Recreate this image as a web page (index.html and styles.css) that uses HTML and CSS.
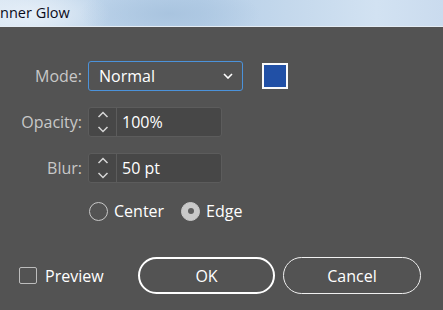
FILE: index.html
```html
<!DOCTYPE html>
<html>
<head>
<meta charset="utf-8">
<link rel="stylesheet" href="styles.css">
</head>
<body>
<div class="titlebar"><span class="title">Inner Glow</span></div>
<div class="dialog">
  <div class="form">
    <div class="label">Mode:</div>
    <div class="ctrl">
      <div class="select">
        <span class="select-text">Normal</span>
        <svg class="chev" width="10" height="6" viewBox="0 0 10 6"><path d="M1 1 L5 5 L9 1" fill="none" stroke="#fff" stroke-width="1.6"/></svg>
      </div>
      <div class="swatch"></div>
    </div>

    <div class="label">Opacity:</div>
    <div class="ctrl">
      <div class="spin">
        <div class="spin-btn">
          <svg width="12" height="24" viewBox="0 0 12 24"><path d="M1.5 7 L6 2.5 L10.5 7" fill="none" stroke="#d6d6d6" stroke-width="1.5"/><path d="M1.5 17 L6 21.5 L10.5 17" fill="none" stroke="#d6d6d6" stroke-width="1.5"/></svg>
        </div>
        <div class="spin-val">100%</div>
      </div>
    </div>

    <div class="label">Blur:</div>
    <div class="ctrl">
      <div class="spin">
        <div class="spin-btn">
          <svg width="12" height="24" viewBox="0 0 12 24"><path d="M1.5 7 L6 2.5 L10.5 7" fill="none" stroke="#d6d6d6" stroke-width="1.5"/><path d="M1.5 17 L6 21.5 L10.5 17" fill="none" stroke="#d6d6d6" stroke-width="1.5"/></svg>
        </div>
        <div class="spin-val">50 pt</div>
      </div>
    </div>

    <div class="label"></div>
    <div class="ctrl radios">
      <div class="radio"><span class="circle"></span><span class="rtext">Center</span></div>
      <div class="radio"><span class="circle on"></span><span class="rtext">Edge</span></div>
    </div>
  </div>

  <div class="footer">
    <div class="check"><span class="box"></span><span class="ctext">Preview</span></div>
    <div class="btn ok">OK</div>
    <div class="btn cancel">Cancel</div>
  </div>
</div>
</body>
</html>
```
FILE: styles.css
```css
* { box-sizing: border-box; }
html, body { margin: 0; padding: 0; }
body {
  width: 443px;
  height: 310px;
  overflow: hidden;
  background: #535353;
  font-family: "Open Sans", "Noto Sans", sans-serif;
  font-size: 16px;
  color: #fff;
}
.titlebar {
  height: 27px;
  border-bottom: 1px solid #e4ecf4;
  background:
    radial-gradient(ellipse 90px 30px at 170px 14px, #a9c4df 0%, rgba(169,196,223,0) 100%),
    radial-gradient(ellipse 80px 30px at 30px 14px, #e6eff8 0%, rgba(230,239,248,0) 100%),
    linear-gradient(90deg, #d6e4f1 0%, #bcd3ea 25%, #b6cfe8 45%, #c4d8ec 65%, #d2e2f2 85%, #cadbee 100%);
  overflow: hidden;
}
.title {
  display: block;
  margin-left: -4px;
  padding-top: 3px;
  font-size: 14.5px;
  line-height: 20px;
  color: #0b0b1a;
}
.dialog { padding-top: 34px; }
.form {
  display: grid;
  grid-template-columns: 82px auto;
  column-gap: 6px;
  row-gap: 16px;
}
.label {
  height: 30px;
  line-height: 30px;
  text-align: right;
  color: #c8c8c8;
  font-size: 16px;
}
.ctrl { display: flex; align-items: center; height: 30px; }
.select {
  width: 155px;
  height: 30px;
  border: 1.5px solid #4b92da;
  border-radius: 3px;
  display: flex;
  align-items: center;
  justify-content: space-between;
  padding: 0 9px 0 10px;
}
.select-text { line-height: 26px; color: #fff; }
.chev { display: block; }
.swatch {
  margin-left: 19px;
  width: 26px;
  height: 26px;
  border: 2px solid #fafafa;
  background: #2150a6;
}
.spin {
  display: flex;
  width: 134px;
  height: 30px;
  border: 1px solid #5c5c5c;
  border-radius: 3px;
  background: #474747;
  overflow: hidden;
}
.spin-btn {
  width: 28px;
  border-right: 1px solid #5c5c5c;
  display: flex;
  align-items: center;
  justify-content: center;
}
.spin-btn svg { display: block; }
.spin-val {
  padding-left: 5px;
  line-height: 28px;
  color: #fff;
}
.radios { height: 20px; margin-top: 2px; }
.radio { display: flex; align-items: center; margin-right: 16px; }
.circle {
  width: 19px;
  height: 19px;
  border-radius: 50%;
  border: 1.5px solid #c8c8c8;
  margin-left: 1px;
  position: relative;
}
.circle.on { background: #c9c9c9; border-color: #c9c9c9; }
.circle.on::after {
  content: "";
  position: absolute;
  left: 50%; top: 50%;
  width: 6px; height: 6px;
  margin: -3px 0 0 -3px;
  border-radius: 50%;
  background: #5e5e5e;
}
.rtext { margin-left: 6px; color: #fff; line-height: 20px; }
.footer {
  display: flex;
  align-items: center;
  margin-top: 28px;
  padding-left: 19px;
}
.check { display: flex; align-items: center; width: 119px; }
.box {
  width: 18px;
  height: 17px;
  border: 1px solid #bdbdbd;
  border-radius: 2px;
}
.ctext { margin-left: 8px; color: #fff; }
.btn {
  height: 37px;
  border-radius: 19px;
  display: flex;
  align-items: center;
  justify-content: center;
  color: #fff;
}
.ok { width: 137px; border: 2.5px solid #fff; }
.cancel { width: 138px; margin-left: 8px; border: 1.5px solid #f0f0f0; }
```
